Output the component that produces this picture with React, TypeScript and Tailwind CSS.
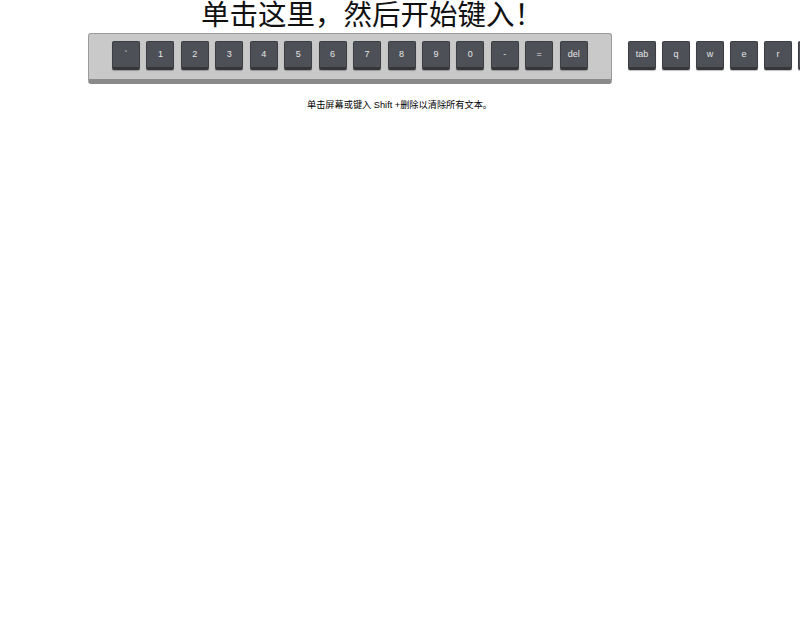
const row1 = ['`', '1', '2', '3', '4', '5', '6', '7', '8', '9', '0', '-', '=', 'del'];
const row2 = ['tab', 'q', 'w', 'e', 'r', ''];

function Key({ label }: { label: string }) {
  return (
    <div className="flex h-[29px] w-[28px] shrink-0 items-center justify-center rounded-[2px] border border-[#3c3e42] border-b-[3px] border-b-[#34363a] bg-[#4d5056] text-[9px] leading-none text-[#e6e6e6] shadow-[0_1px_1px_rgba(0,0,0,0.25)]">
      {label}
    </div>
  );
}

export default function App() {
  return (
    <div
      className="h-[625px] w-[800px] overflow-hidden bg-white"
      style={{ fontFamily: '"Liberation Sans", "Noto Sans CJK SC", sans-serif' }}
    >
      <h1
        className="pl-[201px] pt-[1px] text-[28.5px] font-normal leading-[30px] text-[#111] whitespace-nowrap"
        style={{ fontFamily: '"Liberation Serif", "Noto Sans CJK SC", serif' }}
      >
        单击这里，然后开始键入！
      </h1>

      <div className="mt-[2px] flex items-start">
        <div className="ml-[88px] flex h-[51px] w-[524px] shrink-0 gap-[6.45px] rounded-[3px] border border-[#9a9a9a] border-b-[5px] border-b-[#8a8a8a] bg-[#c9c9c9] pl-[23px] pt-[7px]">
          {row1.map((k) => (
            <Key key={k} label={k} />
          ))}
        </div>
        <div className="ml-[16px] flex shrink-0 gap-[6px] pt-[8px]">
          {row2.map((k, i) => (
            <Key key={i} label={k} />
          ))}
        </div>
      </div>

      <p className="mt-[15px] pl-[307px] text-[9.2px] leading-[12px] text-black whitespace-nowrap">
        单击屏幕或键入 Shift +删除以清除所有文本。
      </p>
    </div>
  );
}
